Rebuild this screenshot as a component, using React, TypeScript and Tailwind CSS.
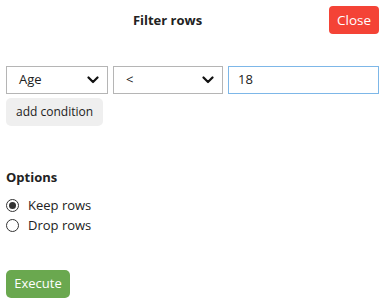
import React, { useState } from 'react'

function Chevron() {
  return (
    <svg width="12" height="8" viewBox="0 0 12 8" className="shrink-0">
      <path d="M1.5 1.5 L6 6 L10.5 1.5" fill="none" stroke="#111" strokeWidth="2.2" strokeLinecap="round" strokeLinejoin="round" />
    </svg>
  )
}

function FakeSelect({ value, width }: { value: string; width: string }) {
  return (
    <div className={`${width} h-[28px] border border-[#b5b5b5] bg-white flex items-center justify-between pl-[12px] pr-[8px] text-[13px] text-[#222]`}>
      <span>{value}</span>
      <Chevron />
    </div>
  )
}

function Radio({ checked, label, onClick }: { checked: boolean; label: string; onClick: () => void }) {
  return (
    <div className="flex items-center h-[20px] cursor-pointer" onClick={onClick}>
      <span className="w-[13px] h-[13px] rounded-full border border-[#333] flex items-center justify-center ml-[6px]">
        {checked && <span className="w-[7px] h-[7px] rounded-full bg-[#333]" />}
      </span>
      <span className="ml-[9px] text-[13px] text-[#222]">{label}</span>
    </div>
  )
}

export default function App() {
  const [keep, setKeep] = useState(true)

  return (
    <div className="w-[385px] h-[307px] bg-white flex flex-col px-[6px] pt-[6px]" style={{ fontFamily: '"Open Sans", "Noto Sans", sans-serif' }}>
      {/* header */}
      <div className="flex items-center h-[28px]">
        <div className="flex-1 text-center font-bold text-[13px] text-[#222] pt-[2px]">Filter rows</div>
        <button className="w-[50px] h-[28px] rounded-[4px] bg-[#f44336] text-white text-[13.5px]">Close</button>
      </div>

      {/* condition */}
      <div className="flex gap-[5px] mt-[32px]">
        <FakeSelect value="Age" width="w-[102px]" />
        <FakeSelect value="<" width="w-[110px]" />
        <div className="flex-1 h-[28px] border border-[#7db7e8] flex items-center pl-[9px] text-[13px] text-[#222]">18</div>
      </div>
      <div className="mt-[4px]">
        <button className="h-[28px] px-[10px] rounded-[5px] bg-[#efefef] text-[12px] text-[#222]">add condition</button>
      </div>

      {/* options */}
      <div className="mt-[42px] font-bold text-[13px] text-[#222]">Options</div>
      <div className="mt-[8px] flex flex-col ml-[-6px]">
        <Radio checked={keep} label="Keep rows" onClick={() => setKeep(true)} />
        <Radio checked={!keep} label="Drop rows" onClick={() => setKeep(false)} />
      </div>

      <div className="mt-[34px]">
        <button className="h-[28px] w-[64px] rounded-[5px] bg-[#6aa84f] text-white text-[13px]">Execute</button>
      </div>
    </div>
  )
}
